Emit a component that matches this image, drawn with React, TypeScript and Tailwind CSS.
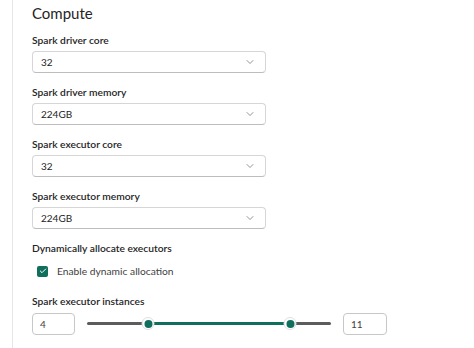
import { Check, ChevronDown } from 'lucide-react'

const font = { fontFamily: 'Lato, "Noto Sans", sans-serif' }

type Field = {
  label: string
  value: string
}

const fields: Field[] = [
  { label: 'Spark driver core', value: '32' },
  { label: 'Spark driver memory', value: '224GB' },
  { label: 'Spark executor core', value: '32' },
  { label: 'Spark executor memory', value: '224GB' },
]

function Select({ value }: { value: string }) {
  return (
    <div className="flex h-[22px] w-[234px] items-center justify-between rounded-[4px] border border-[#d6d6d6] border-b-[#bdbdbd] bg-white pl-[8px] pr-[9px]">
      <span className="text-[10px] text-[#242424]">{value}</span>
      <ChevronDown className="h-[12px] w-[12px] text-[#707070]" strokeWidth={1.5} />
    </div>
  )
}

function RangeSlider({ min, max, low, high }: { min: number; max: number; low: number; high: number }) {
  const lowPct = ((low - min) / (max - min)) * 100
  const highPct = ((high - min) / (max - min)) * 100
  return (
    <div className="relative mx-[12px] h-[22px] flex-1">
      <div className="absolute left-0 right-0 top-[9px] h-[3px] rounded-full bg-[#5c5c5c]" />
      <div
        className="absolute top-[9px] h-[3px] bg-[#0f6e5c]"
        style={{ left: `${lowPct}%`, width: `${highPct - lowPct}%` }}
      />
      {[lowPct, highPct].map((p, i) => (
        <div
          key={i}
          className="absolute top-[4px] flex h-[13px] w-[13px] -translate-x-1/2 items-center justify-center rounded-full border border-[#e0e0e0] bg-white"
          style={{ left: `${p}%` }}
        >
          <div className="h-[8px] w-[8px] rounded-full bg-[#0f6e5c]" />
        </div>
      ))}
    </div>
  )
}

export default function App() {
  return (
    <div className="h-[348px] w-[474px] overflow-hidden bg-white" style={font}>
      <div className="ml-[12px] h-full border-l border-[#e6e6e6] pl-[19px] pt-[3px]">
        <h1 className="h-[20px] text-[15px] leading-[20px] text-[#242424]">Compute</h1>

        <div className="mt-[10px] flex flex-col gap-[12px]">
          {fields.map((f) => (
            <div key={f.label}>
              <div className="mb-[4px] h-[14px] text-[10.25px] font-semibold leading-[14px] text-[#242424]">
                {f.label}
              </div>
              <Select value={f.value} />
            </div>
          ))}

          <div>
            <div className="h-[14px] text-[10.25px] font-semibold leading-[14px] text-[#242424]">
              Dynamically allocate executors
            </div>
            <label className="mt-[9px] flex h-[14px] items-center pl-[5px]">
              <span className="flex h-[11px] w-[11px] items-center justify-center rounded-[2px] bg-[#0f6e5c]">
                <Check className="h-[8px] w-[8px] text-white" strokeWidth={3} />
              </span>
              <span className="ml-[9px] text-[10.25px] leading-[14px] text-[#424242]">
                Enable dynamic allocation
              </span>
            </label>
          </div>

          <div className="mt-[4px]">
            <div className="mb-[5px] h-[14px] text-[10.25px] font-semibold leading-[14px] text-[#242424]">
              Spark executor instances
            </div>
            <div className="flex w-[355px] items-center">
              <div className="flex h-[22px] w-[43px] items-center rounded-[4px] border border-[#c7c7c7] pl-[7px] text-[10px] text-[#424242]">
                4
              </div>
              <RangeSlider min={1} max={13} low={4} high={11} />
              <div className="flex h-[22px] w-[44px] items-center rounded-[4px] border border-[#c7c7c7] pl-[7px] text-[10px] text-[#424242]">
                11
              </div>
            </div>
          </div>
        </div>
      </div>
    </div>
  )
}
